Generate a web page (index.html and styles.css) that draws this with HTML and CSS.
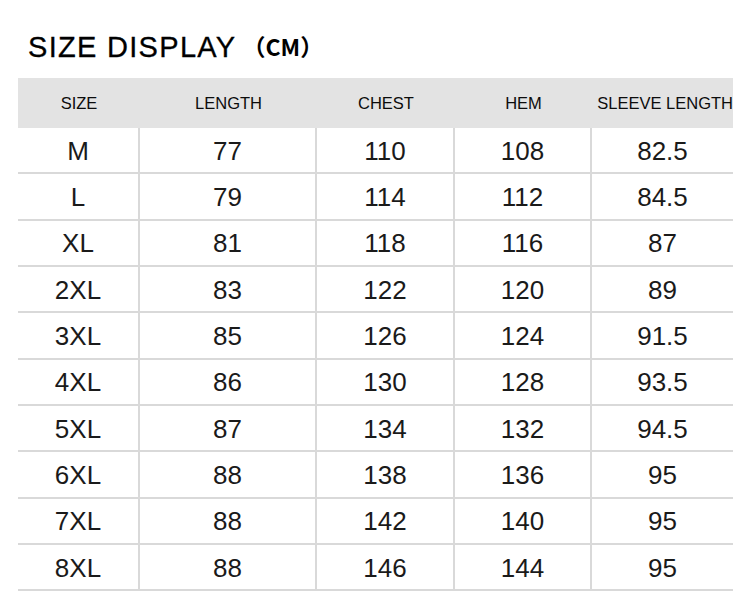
FILE: index.html
```html
<!DOCTYPE html>
<html>
<head>
<meta charset="utf-8">
<link rel="stylesheet" href="styles.css">
</head>
<body>
<div class="page">
  <h1 class="title">SIZE DISPLAY<span class="unit">（CM）</span></h1>
  <div class="table">
    <div class="row head">
      <div class="cell">SIZE</div><div class="cell">LENGTH</div><div class="cell">CHEST</div><div class="cell">HEM</div><div class="cell">SLEEVE LENGTH</div>
    </div>
    <div class="row"><div class="cell">M</div><div class="cell">77</div><div class="cell">110</div><div class="cell">108</div><div class="cell">82.5</div></div>
    <div class="row"><div class="cell">L</div><div class="cell">79</div><div class="cell">114</div><div class="cell">112</div><div class="cell">84.5</div></div>
    <div class="row"><div class="cell">XL</div><div class="cell">81</div><div class="cell">118</div><div class="cell">116</div><div class="cell">87</div></div>
    <div class="row"><div class="cell">2XL</div><div class="cell">83</div><div class="cell">122</div><div class="cell">120</div><div class="cell">89</div></div>
    <div class="row"><div class="cell">3XL</div><div class="cell">85</div><div class="cell">126</div><div class="cell">124</div><div class="cell">91.5</div></div>
    <div class="row"><div class="cell">4XL</div><div class="cell">86</div><div class="cell">130</div><div class="cell">128</div><div class="cell">93.5</div></div>
    <div class="row"><div class="cell">5XL</div><div class="cell">87</div><div class="cell">134</div><div class="cell">132</div><div class="cell">94.5</div></div>
    <div class="row"><div class="cell">6XL</div><div class="cell">88</div><div class="cell">138</div><div class="cell">136</div><div class="cell">95</div></div>
    <div class="row"><div class="cell">7XL</div><div class="cell">88</div><div class="cell">142</div><div class="cell">140</div><div class="cell">95</div></div>
    <div class="row"><div class="cell">8XL</div><div class="cell">88</div><div class="cell">146</div><div class="cell">144</div><div class="cell">95</div></div>
  </div>
</div>
</body>
</html>
```

FILE: styles.css
```css
html, body {
  margin: 0;
  padding: 0;
  background: #ffffff;
}
.page {
  width: 750px;
  height: 599px;
  overflow: hidden;
  padding: 33px 0 0 18px;
  box-sizing: border-box;
  font-family: "Liberation Sans", Arial, sans-serif;
  color: #111111;
}
.title {
  margin: 0 0 16px 10px;
  height: 29px;
  font-size: 29px;
  line-height: 29px;
  font-weight: normal;
  letter-spacing: 1.3px;
  color: #000000;
  white-space: nowrap;
  -webkit-text-stroke: 0.3px #000000;
}
.unit {
  font-family: "Noto Sans CJK SC", "Liberation Sans", sans-serif;
  font-size: 23px;
  line-height: 1;
  font-weight: 700;
  letter-spacing: 0;
  margin-left: 6px;
  vertical-align: 1px;
  -webkit-text-stroke: 0;
}
.table {
  width: 715px;
}
.row {
  display: grid;
  grid-template-columns: 122px 177px 138px 137px 141px;
  height: 46.33px;
  box-sizing: border-box;
  border-bottom: 2px solid #d9d9d9;
}
.row.head {
  height: 50px;
  background: #e3e3e3;
  border-bottom: none;
}
.cell {
  display: flex;
  align-items: center;
  justify-content: center;
  font-size: 26px;
  white-space: nowrap;
  box-sizing: border-box;
  border-right: 2px solid #d9d9d9;
  padding-top: 2px;
  color: #1a1a1a;
}
.cell:last-child {
  border-right: none;
}
.head .cell {
  font-size: 16.5px;
  border-right: none;
  padding-top: 0;
  color: #0c0c0c;
}
.head .cell:last-child {
  justify-content: flex-end;
  overflow: hidden;
}
```
